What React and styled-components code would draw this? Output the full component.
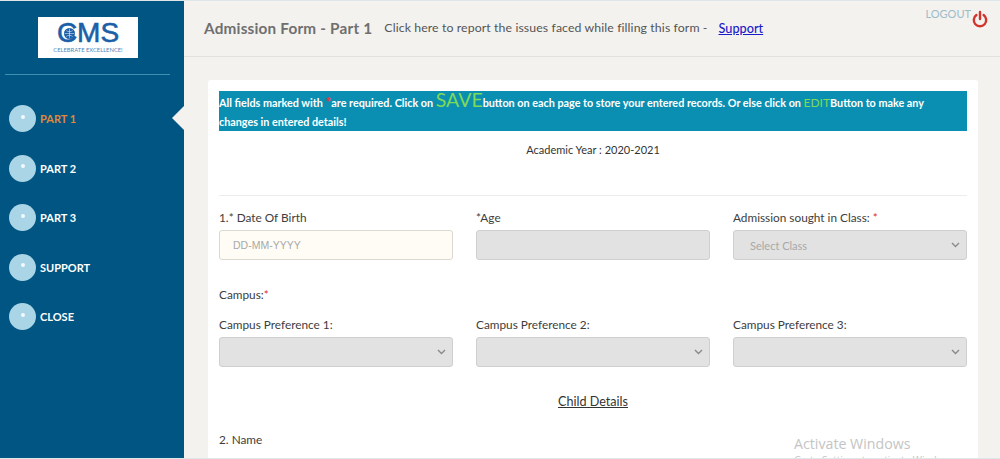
import styled, { createGlobalStyle } from 'styled-components';

const GlobalStyle = createGlobalStyle`
  html, body {
    margin: 0;
    padding: 0;
    height: 100%;
    overflow: hidden;
    background: #dfe6ea;
    font-family: "Lato", "Noto Sans", sans-serif;
  }
  * { box-sizing: border-box; }
`

const Page = styled.div`
  position: relative;
  display: flex;
  height: 457px;
  margin-top: 1px;
  overflow: hidden;
  background: #f3f2ef;
`
const Sidebar = styled.aside`
  width: 184px;
  flex-shrink: 0;
  background: #005582;
  padding: 16px 14px 0 5px;
`
const LogoBox = styled.div`
  width: 100px;
  height: 41px;
  margin-left: 33px;
  background: #fff;
  display: flex;
  flex-direction: column;
  align-items: center;
  padding-top: 5px;
`
const LogoMark = styled.div`
  display: flex;
  align-items: center;
  height: 22px;
  color: #1b5fa8;
  font-family: "Liberation Sans", sans-serif;
  font-size: 28px;
  font-weight: 400;
  -webkit-text-stroke: 0.6px #1b5fa8;
`
const LogoGlobe = styled.svg`
  width: 11px;
  height: 11px;
  margin: 0 2px 0 -13px;
`
const LogoTag = styled.div`
  color: #4f86b8;
  font-size: 5.8px;
  line-height: 8px;
  margin-top: 2px;
`
const SideRule = styled.hr`
  border: none;
  border-top: 1px solid #3f8fb0;
  margin: 16px 0 0;
`
const SideNav = styled.nav`
  display: flex;
  flex-direction: column;
  gap: 22.5px;
  margin-top: 30px;
`
const NavItem = styled.div`
  position: relative;
  display: flex;
  align-items: center;
  gap: 4px;
  height: 27px;
  padding-left: 4px;
  font-size: 11px;
  font-weight: 700;
  color: ${(props) => (props.active ? '#e0883a' : '#fff')};
`
const NavDot = styled.span`
  width: 27px;
  height: 27px;
  border-radius: 50%;
  background: #a9d5e6;
  display: flex;
  align-items: center;
  justify-content: center;
  padding-bottom: 4px;

  &::after {
    content: '';
    width: 4px;
    height: 4px;
    border-radius: 50%;
    background: #f2fafd;
  }
`
const NavArrow = styled.span`
  position: absolute;
  right: -14px;
  top: 1px;
  width: 0;
  height: 0;
  border-top: 12px solid transparent;
  border-bottom: 12px solid transparent;
  border-right: 12px solid #f3f2ef;
`
const Main = styled.main`
  flex: 1;
  min-width: 0;
`
const Header = styled.header`
  position: relative;
  display: flex;
  align-items: center;
  height: 56px;
  padding: 0 0 2px 20px;
  border-bottom: 1px solid #e2e1de;
`
const HeaderTitle = styled.h1`
  margin: 0;
  font-size: 15.3px;
  font-weight: 700;
  color: #6f6f6f;
  letter-spacing: 0.2px;
`
const HeaderNote = styled.span`
  margin-left: 12px;
  font-size: 12.3px;
  color: #555;
  letter-spacing: 0.1px;
`
const SupportLink = styled.a`
  margin-left: 11px;
  font-size: 12.7px;
  font-weight: 500;
  color: #1a1ac8;
  text-decoration: underline;
`
const Logout = styled.div`
  position: absolute;
  right: 12px;
  top: 6px;
  display: flex;
  align-items: flex-start;
  gap: 1px;
  font-size: 11px;
  line-height: 14px;
  color: #9dbcc9;
`
const PowerIcon = styled.svg`
  width: 16px;
  height: 18px;
  margin-top: 3px;
`
const Card = styled.section`
  width: 770px;
  height: 400px;
  margin: 23px 0 0 24px;
  padding: 11px 11px 0;
  background: #fff;
  border-radius: 3px;
`
const Banner = styled.div`
  height: 40px;
  background: #0a8fb2;
  color: #fff;
  font-size: 10.8px;
  font-weight: 700;
  line-height: 19px;
  padding: 2px 10px 0 0;
`
const Red = styled.span`
  color: #e0262b;
`
const BannerStar = styled(Red)`
  color: #f0353a;
  font-size: 14px;
  line-height: 0;
`
const Green = styled.span`
  color: #7ed957;
  font-weight: 400;
  font-size: ${(props) => props.size}px;
  line-height: 14px;
`
const Year = styled.div`
  text-align: center;
  font-size: 11px;
  color: #333;
  margin-top: 12px;
  line-height: 14px;
`
const Rule = styled.hr`
  border: none;
  border-top: 1px solid #ececec;
  margin: 38px 0 0;
`
const FieldRow = styled.div`
  display: grid;
  grid-template-columns: repeat(3, 234px);
  column-gap: 23px;
  margin-top: ${(props) => props.top}px;
`
const Field = styled.div`
  display: flex;
  flex-direction: column;
  gap: 5px;
`
const Label = styled.label`
  font-size: 11.8px;
  line-height: 14px;
  color: #3d3d3d;
`
const Control = styled.div`
  display: flex;
  align-items: center;
  justify-content: space-between;
  height: 30px;
  padding: 0 6px 0 ${(props) => (props.blank ? 13 : 16)}px;
  border: 1px solid ${(props) => (props.blank ? '#dcd9d0' : '#cfcfcf')};
  border-radius: 3px;
  background: ${(props) => (props.blank ? '#fffcf5' : '#e2e2e2')};
  font-family: ${(props) => (props.blank ? '"Liberation Sans", sans-serif' : 'inherit')};
  font-size: ${(props) => (props.blank ? 10.5 : 11)}px;
  color: #a8a8a8;
`
const CampusLabel = styled(Label)`
  display: block;
  margin-top: 28px;
`
const SectionTitle = styled.div`
  margin-top: 27px;
  text-align: center;
  font-size: 12.6px;
  line-height: 16px;
  color: #333;
  text-decoration: underline;
`
const NameLabel = styled(Label)`
  display: block;
  margin-top: 23px;
`
const Watermark = styled.div`
  position: absolute;
  left: 794px;
  top: 434px;
  font-family: "Open Sans", sans-serif;
  font-size: 14.2px;
  line-height: 18px;
  color: #c4c4c4;
  white-space: nowrap;

  > small {
    display: block;
    font-size: 10px;
    line-height: 14px;
  }
`

const Chevron = () => (
  <svg width="9" height="6" viewBox="0 0 9 6" fill="none">
    <path d="M1 1l3.5 3.5L8 1" stroke="#8a8a8a" strokeWidth="1.4" />
  </svg>
)

const SelectBox = ({ children }) => (
  <Control>
    <span>{children}</span>
    <Chevron />
  </Control>
)

const navItems = ['PART 1', 'PART 2', 'PART 3', 'SUPPORT', 'CLOSE']

const App = () => {
  return (
    <>
      <GlobalStyle />
      <Page>
        <Sidebar>
          <LogoBox>
            <LogoMark>
              C
              <LogoGlobe viewBox="0 0 15 15">
                <circle cx="7.5" cy="7.5" r="7.5" fill="#1b5fa8" />
                <path d="M1 7.5h13M7.5 1v13M3 3.5c3 2 6 2 9 0M3 11.5c3-2 6-2 9 0" stroke="#fff" strokeWidth="0.7" fill="none" />
              </LogoGlobe>
              MS
            </LogoMark>
            <LogoTag>CELEBRATE EXCELLENCE!</LogoTag>
          </LogoBox>
          <SideRule />
          <SideNav>
            {navItems.map((item, index) => (
              <NavItem key={item} active={index === 0}>
                <NavDot />
                {item}
                {index === 0 && <NavArrow />}
              </NavItem>
            ))}
          </SideNav>
        </Sidebar>
        <Main>
          <Header>
            <HeaderTitle>Admission Form - Part 1</HeaderTitle>
            <HeaderNote>Click here to report the issues faced while filling this form -</HeaderNote>
            <SupportLink>Support</SupportLink>
            <Logout>
              LOGOUT
              <PowerIcon viewBox="0 0 16 18" fill="none">
                <path d="M4.4 5a6.2 6.2 0 1 0 7.2 0" stroke="#d0342c" strokeWidth="2.4" strokeLinecap="round" />
                <path d="M8 2v7" stroke="#d0342c" strokeWidth="2.4" strokeLinecap="round" />
              </PowerIcon>
            </Logout>
          </Header>
          <Card>
            <Banner>
              All fields marked with <BannerStar>*</BannerStar>are required. Click on <Green size={19.5}>SAVE</Green>button on each page to store your entered records. Or else click on <Green size={12}>EDIT</Green>Button to make any changes in entered details!
            </Banner>
            <Year>Academic Year : 2020-2021</Year>
            <Rule />
            <FieldRow top={15}>
              <Field>
                <Label>1.* Date Of Birth</Label>
                <Control blank>DD-MM-YYYY</Control>
              </Field>
              <Field>
                <Label>*Age</Label>
                <Control />
              </Field>
              <Field>
                <Label>Admission sought in Class: <Red>*</Red></Label>
                <SelectBox>Select Class</SelectBox>
              </Field>
            </FieldRow>
            <CampusLabel>Campus:<Red>*</Red></CampusLabel>
            <FieldRow top={16}>
              {[1, 2, 3].map((n) => (
                <Field key={n}>
                  <Label>Campus Preference {n}:</Label>
                  <SelectBox />
                </Field>
              ))}
            </FieldRow>
            <SectionTitle>Child Details</SectionTitle>
            <NameLabel>2. Name</NameLabel>
          </Card>
        </Main>
        <Watermark>
          Activate Windows
          <small>Go to Settings to activate Windows.</small>
        </Watermark>
      </Page>
    </>
  );
};

export default App;
